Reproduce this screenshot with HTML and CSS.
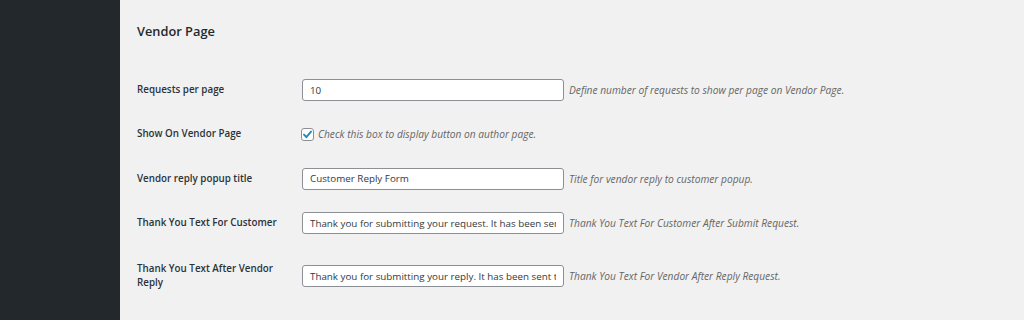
FILE: index.html
```html
<!DOCTYPE html>
<html>
<head>
<meta charset="utf-8">
<link rel="stylesheet" href="styles.css">
</head>
<body>
<div class="layout">
  <aside class="sidebar"></aside>
  <main class="content">
    <h2 class="title">Vendor Page</h2>
    <div class="form">
      <div class="row">
        <div class="label">Requests per page</div>
        <div class="field">
          <input class="text" type="text" value="10">
          <span class="desc">Define number of requests to show per page on Vendor Page.</span>
        </div>
      </div>
      <div class="row">
        <div class="label">Show On Vendor Page</div>
        <div class="field">
          <span class="check"><svg viewBox="0 0 13 13" width="13" height="13"><path d="M3 6.6 L5.4 9.2 L10 3.6" fill="none" stroke="#1e8cbe" stroke-width="1.9" stroke-linecap="round" stroke-linejoin="round"/></svg></span>
          <span class="desc desc-check">Check this box to display button on author page.</span>
        </div>
      </div>
      <div class="row">
        <div class="label">Vendor reply popup title</div>
        <div class="field">
          <input class="text" type="text" value="Customer Reply Form">
          <span class="desc">Title for vendor reply to customer popup.</span>
        </div>
      </div>
      <div class="row">
        <div class="label">Thank You Text For Customer</div>
        <div class="field">
          <input class="text" type="text" value="Thank you for submitting your request. It has been sent to the vendor.">
          <span class="desc">Thank You Text For Customer After Submit Request.</span>
        </div>
      </div>
      <div class="row row-tall">
        <div class="label">Thank You Text After Vendor Reply</div>
        <div class="field">
          <input class="text" type="text" value="Thank you for submitting your reply. It has been sent to the customer.">
          <span class="desc">Thank You Text For Vendor After Reply Request.</span>
        </div>
      </div>
    </div>
  </main>
</div>
</body>
</html>
```
FILE: styles.css
```css
html, body {
  margin: 0;
  padding: 0;
  height: 100%;
}
body {
  background: #f1f1f1;
  font-family: "Open Sans", "Noto Sans", sans-serif;
  color: #23282d;
}
.layout {
  display: flex;
  min-height: 320px;
}
.sidebar {
  width: 120px;
  flex: 0 0 120px;
  background: #23282d;
}
.content {
  flex: 1;
  padding: 0 0 0 17px;
}
.title {
  margin: 0;
  padding-top: 22px;
  height: 68px;
  box-sizing: border-box;
  font-size: 12.8px;
  line-height: 18px;
  font-weight: 600;
  color: #23282d;
}
.form {
  display: flex;
  flex-direction: column;
}
.row {
  display: flex;
  align-items: center;
  height: 44.3px;
}
.row-tall {
  height: 62px;
}
.label {
  width: 165px;
  flex: 0 0 165px;
  font-size: 9.8px;
  line-height: 14px;
  font-weight: 600;
  color: #2c3338;
  padding-right: 20px;
  box-sizing: border-box;
}
.field {
  display: flex;
  align-items: center;
}
.text {
  width: 262px;
  height: 22px;
  box-sizing: border-box;
  border: 1px solid #8c8f94;
  border-radius: 3px;
  background: #fff;
  padding: 0 7px;
  font-family: "Open Sans", "Noto Sans", sans-serif;
  font-size: 9.8px;
  color: #32373c;
  margin: 0;
}
.desc {
  margin-left: 5px;
  font-size: 10.2px;
  font-style: italic;
  color: #666;
}
.desc-check {
  margin-left: 4px;
}
.check {
  width: 13px;
  height: 13px;
  box-sizing: border-box;
  border: 1px solid #8c8f94;
  border-radius: 3px;
  background: #fff;
  display: inline-flex;
  align-items: center;
  justify-content: center;
  margin-left: -1px;
}
.check svg {
  display: block;
  flex: 0 0 auto;
}
```
